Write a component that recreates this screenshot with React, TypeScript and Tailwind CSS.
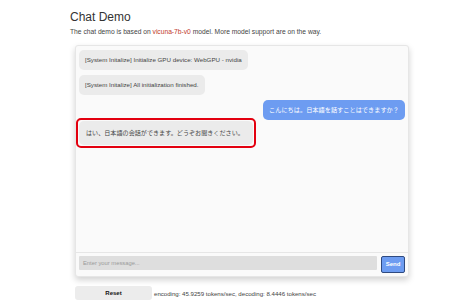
import React from 'react';

const font = "font-['Liberation_Sans','Noto_Sans_CJK_JP',sans-serif]";

const App = () => {
  return (
    <div className={`w-[474px] h-[306px] bg-white overflow-hidden ${font}`}>
      {/* Header */}
      <div className="pl-[70px] pt-[10px]">
        <h1 className="text-[12px] leading-[14px] text-[#333]">Chat Demo</h1>
        <p className="mt-[3px] text-[6.7px] leading-[9px] text-[#444]">
          The chat demo is based on <span className="text-[#c0392b]">vicuna-7b-v0</span> model. More model support are on the way.
        </p>
      </div>

      {/* Chat box */}
      <div className="ml-[75px] mt-[9px] w-[334px] h-[232px] bg-[#fafafa] border border-[#e6e6e6] rounded-[3px] shadow-[0_3px_6px_rgba(0,0,0,0.18)] flex flex-col">
        <div className="h-[206px] px-[3px] pt-[4px] flex flex-col gap-[5px]">
          <div className="self-start bg-[#ebebeb] rounded-[5px] px-[6px] py-[5px] text-[6.2px] leading-[10px] text-[#444]">
            [System Initalize] Initialize GPU device: WebGPU - nvidia
          </div>
          <div className="self-start bg-[#ebebeb] rounded-[5px] px-[6px] py-[5px] text-[6.2px] leading-[10px] text-[#444]">
            [System Initalize] All initialization finished.
          </div>
          <div className="self-end bg-[#6d9cf1] rounded-[5px] px-[6px] py-[5px] text-[6.2px] leading-[10px] text-white">
            こんにちは。日本語を話すことはできますか？
          </div>
          <div className="relative self-start -mt-[4px] bg-[#ebebeb] rounded-[5px] pl-[7px] pr-[9px] py-[7px] text-[6.1px] leading-[10px] text-[#444]">
            はい、日本語の会話ができます。どうぞお聞きください。
            <span className="absolute -inset-[3px] border-2 border-[#e3000f] rounded-[5px]" />
          </div>
        </div>
        <div className="border-t border-[#e6e6e6] px-[3px] pt-[3px] flex items-start gap-[4px]">
          <div className="w-[299px] h-[14px] bg-[#dedede] rounded-[1px] px-[4px] text-[5.8px] leading-[14px] text-[#9a9a9a]">
            Enter your message...
          </div>
          <button className="w-[24px] h-[17px] bg-[#6d9cf1] border border-[#2f4a80] rounded-[2px] text-[6px] font-bold text-white leading-[15px]">
            Send
          </button>
        </div>
      </div>

      {/* Bottom row */}
      <div className="ml-[75px] mt-[9px] flex items-center gap-[2px]">
        <button className="w-[77px] h-[14px] bg-[#ececec] rounded-[3px] text-[6px] font-bold text-[#111] leading-[14px]">
          Reset
        </button>
        <span className="text-[6.1px] leading-[9px] text-[#444]">
          encoding: 45.9259 tokens/sec, decoding: 8.4446 tokens/sec
        </span>
      </div>
    </div>
  );
};

export default App;
